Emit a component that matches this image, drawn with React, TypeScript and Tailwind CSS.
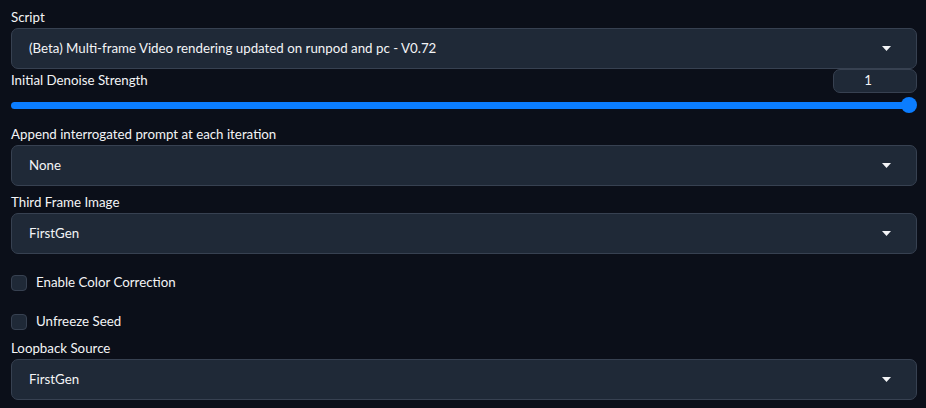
import React from "react";

const font = { fontFamily: '"Source Sans Pro", Lato, "Noto Sans", sans-serif' };

function Caret() {
  return (
    <svg width="9" height="5" viewBox="0 0 9 5" className="shrink-0">
      <path d="M0 0 L9 0 L4.5 5 Z" fill="#f3f4f6" />
    </svg>
  );
}

function Dropdown({ value }: { value: string }) {
  return (
    <div className="h-[41px] w-[906px] rounded-[7px] border border-[#374151] bg-[#1f2937] flex items-center justify-between pl-[17px] pr-[25px]">
      <span className="text-[13.3px] text-[#f3f4f6]">{value}</span>
      <Caret />
    </div>
  );
}

function Label({ children }: { children: React.ReactNode }) {
  return <div className="text-[13.3px] leading-[20px] text-[#f3f4f6]">{children}</div>;
}

function Check({ label }: { label: string }) {
  return (
    <div className="flex items-center gap-[9px] h-[20px]">
      <div className="w-[16px] h-[16px] rounded-[4px] border border-[#374151] bg-[#1f2937]" />
      <span className="text-[13.3px] text-[#f3f4f6]">{label}</span>
    </div>
  );
}

export default function App() {
  return (
    <div className="w-[926px] h-[408px] bg-[#0b0f19] overflow-hidden pl-[11px]" style={font}>
      <div className="pt-[7px]">
        <Label>Script</Label>
      </div>
      <div className="mt-[1px]">
        <Dropdown value="(Beta) Multi-frame Video rendering updated on runpod and pc - V0.72" />
      </div>
      <div className="flex justify-between items-start w-[906px]">
        <div className="mt-[1px]">
          <Label>Initial Denoise Strength</Label>
        </div>
        <div className="h-[24px] w-[84px] rounded-[7px] border border-[#374151] bg-[#1f2937] flex items-center justify-center pr-[14px] text-[13.3px] text-[#f3f4f6]">
          1
        </div>
      </div>
      <div className="relative w-[906px] h-[16px] mt-[4px]">
        <div className="absolute left-0 right-[8px] top-[5px] h-[7px] rounded-full bg-[#0b7dff]" />
        <div className="absolute right-0 top-0 w-[16px] h-[16px] rounded-full bg-[#0b7dff]" />
      </div>
      <div className="mt-[11px]">
        <Label>Append interrogated prompt at each iteration</Label>
      </div>
      <div className="mt-[1px]">
        <Dropdown value="None" />
      </div>
      <div className="mt-[6px]">
        <Label>Third Frame Image</Label>
      </div>
      <div className="mt-[1px]">
        <Dropdown value="FirstGen" />
      </div>
      <div className="mt-[19px]">
        <Check label="Enable Color Correction" />
      </div>
      <div className="mt-[19px]">
        <Check label="Unfreeze Seed" />
      </div>
      <div className="mt-[6px]">
        <Label>Loopback Source</Label>
      </div>
      <div className="mt-[1px]">
        <Dropdown value="FirstGen" />
      </div>
    </div>
  );
}
